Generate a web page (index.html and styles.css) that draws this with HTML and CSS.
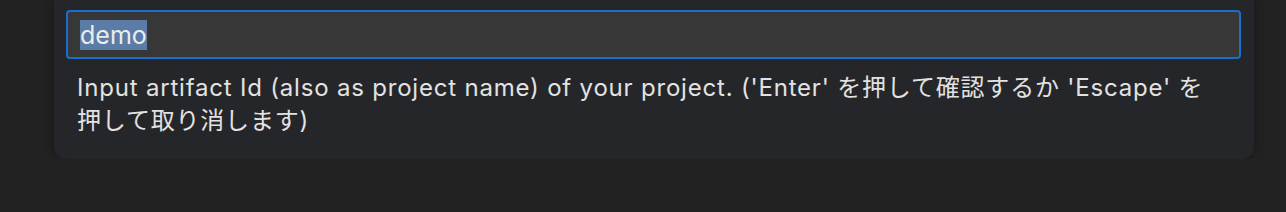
FILE: index.html
```html
<!DOCTYPE html>
<html lang="ja">
<head>
  <meta charset="UTF-8">
  <title>Quick Input</title>
  <link rel="stylesheet" href="styles.css">
</head>
<body>
  <div class="quick-input">
    <div class="input-box">
      <span class="value">demo</span>
    </div>
    <p class="message">Input artifact Id (also as project name) of your project. ('Enter' を押して確認するか 'Escape' を押して取り消します)</p>
  </div>
</body>
</html>
```

FILE: styles.css
```css
body {
  margin: 0;
  background: #222222;
  font-family: Inter, "Noto Sans CJK JP", sans-serif;
  color: #e2e2e2;
}

.quick-input {
  width: 1200px;
  margin-left: 54px;
  padding: 10px 13px 22px 12px;
  box-sizing: border-box;
  background: #252629;
  border-radius: 0 0 12px 12px;
  box-shadow: 0 0 10px rgba(0, 0, 0, 0.35);
}

.input-box {
  height: 49px;
  box-sizing: border-box;
  border: 2px solid #1a6fcc;
  border-radius: 4px;
  background: #373737;
  padding: 0 12px;
  display: flex;
  align-items: center;
}

.value {
  font-size: 25px;
  line-height: 30px;
  background: #5b7ca6;
  color: #ececec;
}

.message {
  margin: 12px 26px 0 11px;
  font-size: 24px;
  letter-spacing: 0.8px;
  line-height: 33px;
}
```
